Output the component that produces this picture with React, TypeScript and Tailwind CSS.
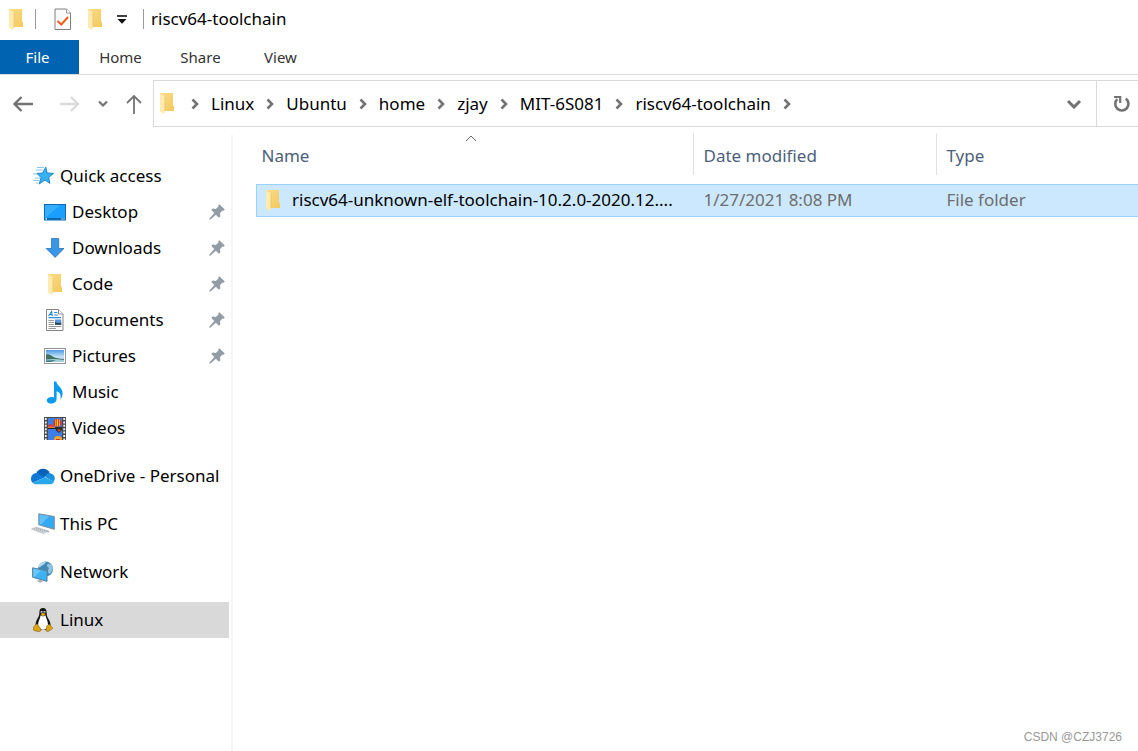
import React, { useState } from "react";

const TABS = ["Home", "Share", "View"];
const CRUMBS = ["Linux", "Ubuntu", "home", "zjay", "MIT-6S081", "riscv64-toolchain"];

function FolderIcon() {
  return (
    <svg width="14" height="21" viewBox="0 0 14 21" aria-hidden="true">
      <defs>
        <linearGradient id="folderBody" x1="0" y1="0" x2="1" y2="1">
          <stop offset="0" stopColor="#f9dc8b" />
          <stop offset="1" stopColor="#f3c95c" />
        </linearGradient>
      </defs>
      <path d="M0 0H13V12.5L14 13.5V18H4L0 16Z" fill="url(#folderBody)" />
      <path d="M0 0.4L4.4 3Q5 3.5 5 4.2V18.5L3.8 21L0 18.4Z" fill="#ffeab0" />
      <path d="M5 4V18.2" stroke="#ecc462" strokeWidth="0.8" />
    </svg>
  );
}

function PropertiesIcon() {
  return (
    <svg width="18" height="23" viewBox="0 0 18 23" aria-hidden="true">
      <path d="M1 1H12.5L16.5 5V21.5H1Z" fill="#fafafa" stroke="#808080" />
      <path d="M12.5 1V5H16.5" fill="#fff" stroke="#9a9a9a" />
      <path d="M3.5 13L7.3 16.6L14 9" fill="none" stroke="#f25a17" strokeWidth="2" />
    </svg>
  );
}

function CrumbChevron() {
  return (
    <svg width="8" height="12" viewBox="0 0 8 12" aria-hidden="true">
      <path d="M1.5 1.5L6 6L1.5 10.5" fill="none" stroke="#737373" strokeWidth="2.6" />
    </svg>
  );
}

function PinIcon() {
  return (
    <svg width="16" height="16" viewBox="0 0 16 16" aria-hidden="true">
      <path
        d="M10.3 0.2L15.8 5.6L14.6 6.7L13.5 6.5L10.9 9.2L11.4 12.2L9.9 13.7L6.9 10.7L1.5 15.5L0.2 15.8L0.5 14.5L5.3 9.1L2.3 6.1L3.8 4.6L6.8 5.1L9.5 2.5L9.2 1.3Z"
        fill="#919ca4"
      />
    </svg>
  );
}

function StarIcon() {
  return (
    <svg width="24" height="20" viewBox="0 0 24 20" aria-hidden="true">
      <path d="M5 1.5H12M3.5 4H11M1 8H6M3 12H8M1.5 14.5H7M4 17H6" stroke="#8cc8f0" strokeWidth="1" />
      <path
        d="M13.8 1.2L15.2 6.9L21.6 7.4L16.8 11.2L17.8 17.4L13 14L7.2 18L9 11.6L5 7.4L10.6 7Z"
        fill="#35b1f4"
        stroke="#1780c4"
        strokeWidth="0.9"
      />
    </svg>
  );
}

function DesktopIcon() {
  return (
    <svg width="22" height="17" viewBox="0 0 22 17" aria-hidden="true">
      <rect x="0.5" y="0.5" width="21" height="15.5" fill="#1a9fff" stroke="#0b6cb5" />
      <path d="M1 14L16 1H1Z" fill="#36aefe" />
      <path d="M1 14.8H21" stroke="#0a558f" strokeWidth="1.2" />
      <path d="M1.5 14.8H3M17.5 14.8H18.5M19.5 14.8H20.5" stroke="#fff" strokeWidth="1.2" />
    </svg>
  );
}

function DownloadIcon() {
  return (
    <svg width="20" height="20" viewBox="0 0 20 20" aria-hidden="true">
      <path d="M6.5 0.6H13.7V10.5H19L10.1 19.4L1.2 10.5H6.5Z" fill="#3b96e6" stroke="#2a74bb" strokeWidth="0.8" />
    </svg>
  );
}

function DocumentIcon() {
  return (
    <svg width="18" height="22" viewBox="0 0 18 22" aria-hidden="true">
      <path d="M0.5 0.5H12.5L17 5V21.5H0.5Z" fill="#fdfdfd" stroke="#858585" />
      <path d="M12.5 0.5V5H17" fill="#fff" stroke="#8f8f8f" />
      <path d="M2.5 7L5.6 2.5L6.3 7M3.8 5.5H6" fill="none" stroke="#1e88cf" strokeWidth="1.1" />
      <path d="M8 3.5H11.5M8 6H12M2.5 8.6H15" stroke="#2a93d8" strokeWidth="1.1" />
      <path d="M2.5 11.5H8M2.5 13.5H8M2.5 15.5H8M2.5 17.5H15M2.5 19.5H10" stroke="#9b9b9b" />
      <rect x="9" y="10.5" width="6.2" height="5.2" fill="#5797db" />
      <path d="M9 15.7V13L11.5 14L15.2 13.8V15.7Z" fill="#25424a" />
    </svg>
  );
}

function PictureIcon() {
  return (
    <svg width="22" height="16" viewBox="0 0 22 16" aria-hidden="true">
      <defs>
        <linearGradient id="sky" x1="0" y1="0" x2="0" y2="1">
          <stop offset="0" stopColor="#4f97e5" />
          <stop offset="0.6" stopColor="#cbe6f7" />
          <stop offset="1" stopColor="#4d8cab" />
        </linearGradient>
      </defs>
      <rect x="0.5" y="0.5" width="21" height="15" fill="#fff" stroke="#949494" />
      <rect x="2" y="2" width="18" height="12" fill="url(#sky)" />
      <path d="M2 6.5Q5 5.5 8 8T20 11.2V12H2Z" fill="#436f61" />
      <path d="M2 11.5Q10 10.5 20 12V14H2Z" fill="#9fcfd8" />
      <path d="M2 12.5L12 12L7 14H2Z" fill="#3f7c86" />
    </svg>
  );
}

function MusicIcon() {
  return (
    <svg width="18" height="23" viewBox="0 0 18 23" aria-hidden="true">
      <path
        d="M8 0.5H10.4C10.6 4.6 16.6 6.2 16.6 12.4C16.6 15 15.6 17 14.4 18.4C15.4 13.6 13.6 11 10.6 10.2V18C10.6 20.8 8.2 22.5 5.2 22.5C2.6 22.5 0.8 21.3 0.8 19.4C0.8 17 3.4 15.6 8 16.2Z"
        fill="#0c9bf0"
      />
    </svg>
  );
}

function VideoIcon() {
  return (
    <svg width="22" height="23" viewBox="0 0 22 23" aria-hidden="true">
      <rect width="22" height="23" fill="#4a4a4a" />
      <path d="M1.8 1V23M20.2 1V23" stroke="#f4f4f4" strokeWidth="1.8" strokeDasharray="2 1.4" />
      <rect x="4" y="1" width="14" height="10" fill="#3f7ee8" />
      <rect x="4" y="12" width="14" height="11" fill="#3f7ee8" />
      <circle cx="13.5" cy="5.8" r="4" fill="#d92f28" />
      <path d="M11.8 2.4V9M13.5 2V9.5M15.4 2.5V9" stroke="#f4c21e" strokeWidth="1" />
      <path d="M4 8.5Q7 5.5 10 8.5L10 11H4Z" fill="#d43f4c" />
      <path d="M4 10.3H11" stroke="#f08c20" />
      <path d="M11 10H18V13L15 16L12 13.5Z" fill="#253226" />
      <path d="M13 12.5H17L15 15Z" fill="#e6402b" />
      <path d="M10 23Q10 19 14 19T18 23Z" fill="#f5a51e" />
      <path d="M12 22.5H16" stroke="#cd3326" />
      <path d="M4 11.5H13" stroke="#222" />
    </svg>
  );
}

function OneDriveIcon() {
  return (
    <svg width="25" height="17" viewBox="0 0 25 17" aria-hidden="true">
      <path d="M5.5 5.2A7.6 7.6 0 0 1 19.6 5.3L13 9.5Z" fill="#0a62b8" />
      <path d="M5.6 4.9C2.4 5 0 7.8 0 10.9C0 12.6 0.7 14 1.7 15L14.8 9.4L8.8 5.8Q7.3 4.9 5.6 4.9Z" fill="#0f78d4" />
      <path d="M19.2 5.2C22.3 5.2 24.7 7.7 24.8 10.8L23.6 14L14.8 9Q16.2 5.2 19.2 5.2Z" fill="#1790df" />
      <path d="M1.6 14.9L14.8 9.2L24.1 13.9C23 15.8 21.4 16.6 19.6 16.6H5.8C4 16.6 2.6 16 1.6 14.9Z" fill="#28a8ea" />
    </svg>
  );
}

function ComputerIcon() {
  return (
    <svg width="24" height="22" viewBox="0 0 24 22" aria-hidden="true">
      <path d="M7.8 0.8L23.3 3.5V16.3L7.8 11.8Z" fill="#33a9f4" stroke="#7c8c98" strokeWidth="1" />
      <path d="M8.5 1.6L18 3.3L10 11.8L8.5 11.3Z" fill="#5dc0fa" />
      <path d="M0.5 16L5 14.3L17.3 17.8L12.5 20.6Z" fill="#d3d8db" stroke="#a8afb4" strokeWidth="0.6" />
      <path d="M3 16L13 18.8M5.3 15.2L15 18" stroke="#8f989f" strokeWidth="0.7" strokeDasharray="1.2 0.8" />
      <path d="M15.5 17.5L19 18.5L17 19.4L14 18.6Z" fill="#b0b7bb" />
    </svg>
  );
}

function NetworkIcon() {
  return (
    <svg width="22" height="22" viewBox="0 0 22 22" aria-hidden="true">
      <circle cx="13.5" cy="8" r="7.6" fill="#4489b4" />
      <path d="M8.5 2.5Q11 0.4 14 0.7L12.5 3L10 4.5L7.5 6.5L6.3 5Z" fill="#b6dcf0" />
      <path d="M16 2.5L19.5 4L20.9 7.5L19 11.5L17 13L15.7 10L17 7L14.8 5Z" fill="#91c6e3" />
      <path d="M0.6 6.8L15 9.8V20.4L0.6 16.2Z" fill="#3eb2f5" stroke="#5a7f99" strokeWidth="1" />
      <path d="M1.3 7.7L9 9.3L2.5 16L1.3 15.6Z" fill="#69c8fb" />
      <path d="M4.5 19.7L8 18.9L11.5 20L8 21.7Z" fill="#a7afb5" />
    </svg>
  );
}

function TuxIcon() {
  return (
    <svg width="20" height="24" viewBox="0 0 20 24" aria-hidden="true">
      <path
        d="M10 0C7.3 0 6.3 1.9 6.4 4.5C6.5 7.8 5.4 8.8 4.1 11.3C3 13.6 2.1 16.5 2.5 18.5L6 22H14L17.5 18.5C17.9 15.5 16.7 12.7 15.2 10.5C13.8 8.3 13.7 7 13.6 4.2C13.5 1.6 12.5 0 10 0Z"
        fill="#111"
      />
      <path d="M7.6 7.3L10 8.5L12.4 7.3C13 10.2 15.1 13 15 17C14.9 20 13 21.8 10 21.8C7 21.8 5 20 5 17C5 13.5 7.2 10.5 7.6 7.3Z" fill="#fff" />
      <circle cx="8.6" cy="4" r="1.1" fill="#eee" />
      <circle cx="11.5" cy="4" r="1.1" fill="#eee" />
      <circle cx="8.8" cy="4.2" r="0.5" fill="#111" />
      <circle cx="11.3" cy="4.2" r="0.5" fill="#111" />
      <path d="M7.6 6.1Q10 4.1 12.5 6.1Q11.5 8 10 8.1Q8.6 8 7.6 6.1Z" fill="#e6a81a" />
      <path d="M3.1 16L4.5 16.2L7.8 21C8.3 22.8 7 24 5.2 23.6L0.8 22.4C-0.2 22 0.4 21 0.3 19.8C0.2 18.3 1.8 18.6 3.1 16Z" fill="#dda314" stroke="#71500a" strokeWidth="0.5" />
      <path d="M16.6 16.6L15 16.7C13.6 17.6 13.1 20.3 13 22C13 23.7 14.8 24 16 23L19.2 20.8C20 20.1 19.6 19.5 18.7 18.9C17.8 18.2 18 17.3 16.6 16.6Z" fill="#dda314" stroke="#71500a" strokeWidth="0.5" />
    </svg>
  );
}

const QUICK_ACCESS = [
  { name: "Desktop", icon: DesktopIcon, pinned: true },
  { name: "Downloads", icon: DownloadIcon, pinned: true },
  { name: "Code", icon: FolderIcon, pinned: true },
  { name: "Documents", icon: DocumentIcon, pinned: true },
  { name: "Pictures", icon: PictureIcon, pinned: true },
  { name: "Music", icon: MusicIcon, pinned: false },
  { name: "Videos", icon: VideoIcon, pinned: false },
];

const ROOTS = [
  { name: "OneDrive - Personal", icon: OneDriveIcon },
  { name: "This PC", icon: ComputerIcon },
  { name: "Network", icon: NetworkIcon },
  { name: "Linux", icon: TuxIcon },
];

const FILES = [
  { name: "riscv64-unknown-elf-toolchain-10.2.0-2020.12....", date: "1/27/2021 8:08 PM", type: "File folder" },
];

export default function App() {
  const [location, setLocation] = useState("Linux");

  return (
    <div className="relative flex min-h-screen flex-col bg-white font-['Noto_Sans',sans-serif] text-[17px] leading-6 text-black">
      {/* Title bar */}
      <header className="flex h-10 items-center pb-[2px] pl-[9px]">
        <FolderIcon />
        <span className="ml-3 h-5 w-px bg-[#9a9a9a]" />
        <button className="ml-[18px]" aria-label="Properties"><PropertiesIcon /></button>
        <button className="ml-4" aria-label="New folder"><FolderIcon /></button>
        <button className="ml-[15px]" aria-label="Customize Quick Access Toolbar">
          <svg width="10" height="9" viewBox="0 0 10 9">
            <path d="M0 1H10" stroke="#111" strokeWidth="1.6" />
            <path d="M0.5 4H9.5L5 8.8Z" fill="#111" />
          </svg>
        </button>
        <span className="ml-4 h-5 w-px bg-[#9a9a9a]" />
        <h1 className="ml-[7px]">riscv64-toolchain</h1>
      </header>

      {/* Ribbon tabs */}
      <nav className="flex h-[35px] border-b border-[#dadbdc] text-[15px] text-[#333]">
        <button className="w-[79px] bg-[#0063b1] pr-1 text-white">File</button>
        {TABS.map((tab) => (
          <button key={tab} className="w-20 pl-[3px]">{tab}</button>
        ))}
      </nav>

      {/* Address bar */}
      <div className="flex h-[52px] pt-[5px]">
        <div className="flex w-[153px] items-center">
          <button className="ml-3" aria-label="Back">
            <svg width="22" height="18" viewBox="0 0 22 18">
              <path d="M21 9H3M9.5 2L2.5 9L9.5 16" fill="none" stroke="#737373" strokeWidth="2.4" />
            </svg>
          </button>
          <button className="ml-6" aria-label="Forward">
            <svg width="22" height="18" viewBox="0 0 22 18">
              <path d="M2 9H20M13 2L20 9L13 16" fill="none" stroke="#dcdcdc" strokeWidth="2.4" />
            </svg>
          </button>
          <button className="ml-[18px]" aria-label="Recent locations">
            <svg width="10" height="8" viewBox="0 0 10 8">
              <path d="M1 1.5L5 5.5L9 1.5" fill="none" stroke="#737373" strokeWidth="2.2" />
            </svg>
          </button>
          <button className="ml-[18px]" aria-label="Up">
            <svg width="16" height="20" viewBox="0 0 16 20">
              <path d="M8 20V2M1 9L8 2L15 9" fill="none" stroke="#737373" strokeWidth="1.8" />
            </svg>
          </button>
        </div>
        <div className="flex flex-1 items-center border border-r-0 border-[#d9d9d9] pl-[6px]">
          <FolderIcon />
          <span className="ml-[17px]"><CrumbChevron /></span>
          {CRUMBS.map((crumb) => (
            <React.Fragment key={crumb}>
              <button className="ml-3">{crumb}</button>
              <span className="ml-3"><CrumbChevron /></span>
            </React.Fragment>
          ))}
          <button className="ml-auto mr-[14px]" aria-label="Previous locations">
            <svg width="16" height="10" viewBox="0 0 16 10">
              <path d="M2 2L8 8L14 2" fill="none" stroke="#737373" strokeWidth="3" />
            </svg>
          </button>
          <button className="flex h-full w-[42px] items-center justify-center border-l border-[#d9d9d9] pl-2" aria-label="Refresh">
            <svg width="18" height="18" viewBox="0 0 18 18">
              <path d="M4.2 4.2A6.6 6.6 0 1 0 12.8 3.6" fill="none" stroke="#737373" strokeWidth="2.6" />
              <path d="M1 2H7.2V8" fill="none" stroke="#737373" strokeWidth="2.2" />
            </svg>
          </button>
        </div>
      </div>

      <div className="flex flex-1">
        {/* Navigation pane */}
        <aside className="mt-2 w-[233px] shrink-0 border-r-2 border-[#f5f5f5] pr-[2px] pt-[23px]">
          <a href="#quick-access" className="flex h-9 items-center pl-8">
            <StarIcon />
            <span className="ml-1">Quick access</span>
          </a>
          {QUICK_ACCESS.map((item) => (
            <a key={item.name} href={`#${item.name}`} className="flex h-9 items-center pl-[43px] pr-1">
              <span className="flex w-6 justify-center"><item.icon /></span>
              <span className="ml-[5px] flex-1">{item.name}</span>
              {item.pinned && <PinIcon />}
            </a>
          ))}
          {ROOTS.map((item) => (
            <a
              key={item.name}
              href={`#${item.name}`}
              onClick={() => setLocation(item.name)}
              className={`mt-3 flex h-9 items-center whitespace-nowrap pl-[31px] ${location === item.name ? "bg-[#d9d9d9]" : ""}`}
            >
              <span className="flex w-6 justify-center"><item.icon /></span>
              <span className="ml-[5px]">{item.name}</span>
            </a>
          ))}
        </aside>

        {/* File list */}
        <main className="flex-1 pl-[23px]">
          <table className="w-full table-fixed border-collapse text-left">
            <colgroup>
              <col className="w-[437px]" />
              <col className="w-[243px]" />
              <col />
            </colgroup>
            <thead className="align-top text-[#4c607a]">
              <tr className="h-[57px]">
                <th className="p-0 pt-[6px] font-normal" aria-sort="ascending">
                  <div className="flex h-[42px] flex-col border-r border-[#e2e2e2] pl-[5px]">
                    <svg className="mr-3 mt-[2px] self-center" width="12" height="7" viewBox="0 0 12 7" aria-hidden="true">
                      <path d="M1 6L6 1L11 6" fill="none" stroke="#666" />
                    </svg>
                    <span className="mt-[2px]">Name</span>
                  </div>
                </th>
                <th className="p-0 pt-[6px] font-normal">
                  <div className="flex h-[42px] items-center border-r border-[#e2e2e2] pl-[10px] pt-1">Date modified</div>
                </th>
                <th className="p-0 pt-[6px] font-normal">
                  <div className="flex h-[42px] items-center pl-[10px] pt-1">Type</div>
                </th>
              </tr>
            </thead>
            <tbody>
              {FILES.map((file) => (
                <tr key={file.name} className="h-8 border-y border-l border-[#99d1ff] bg-[#cce8ff] text-[#6d6d6d]">
                  <td className="p-0 text-black">
                    <div className="flex items-center whitespace-nowrap pl-[9px]">
                      <FolderIcon />
                      <span className="ml-3">{file.name}</span>
                    </div>
                  </td>
                  <td className="p-0 pl-[10px]">{file.date}</td>
                  <td className="p-0 pl-[10px]">{file.type}</td>
                </tr>
              ))}
            </tbody>
          </table>
        </main>
      </div>

      <footer className="absolute bottom-1 right-4 font-['Liberation_Sans',sans-serif] text-xs leading-5 text-[#999]">
        CSDN @CZJ3726
      </footer>
    </div>
  );
}
